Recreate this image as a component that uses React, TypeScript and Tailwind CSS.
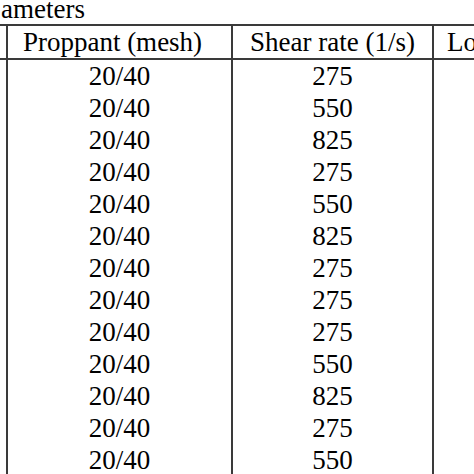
const rows = [
  ["20/40", "275"],
  ["20/40", "550"],
  ["20/40", "825"],
  ["20/40", "275"],
  ["20/40", "550"],
  ["20/40", "825"],
  ["20/40", "275"],
  ["20/40", "275"],
  ["20/40", "275"],
  ["20/40", "550"],
  ["20/40", "825"],
  ["20/40", "275"],
  ["20/40", "550"],
];

export default function App() {
  return (
    <div className="w-[474px] h-[474px] overflow-hidden bg-white text-black font-['Liberation_Serif','Times_New_Roman',serif] text-[27px]">
      {/* Caption, cropped on the left */}
      <div className="leading-[19px] pb-[5px] pl-[1px] whitespace-nowrap">ameters</div>

      <div className="border-t-2 border-[#3a3a3a]">
        {/* Header */}
        <div className="grid grid-cols-[6px_225px_201px_1fr] leading-[32px] border-b-2 border-[#3a3a3a]">
          <div />
          <div className="border-l-2 border-[#3a3a3a] text-center pr-[14px] whitespace-nowrap">Proppant (mesh)</div>
          <div className="border-l-2 border-[#3a3a3a] text-center whitespace-nowrap">Shear rate (1/s)</div>
          <div className="border-l-2 border-[#3a3a3a] pl-[13px] whitespace-nowrap overflow-hidden">Loading</div>
        </div>

        {/* Body */}
        {rows.map((r, i) => (
          <div key={i} className="grid grid-cols-[6px_225px_201px_1fr] leading-[32px]">
            <div />
            <div className="border-l-2 border-[#3a3a3a] text-center">{r[0]}</div>
            <div className="border-l-2 border-[#3a3a3a] text-center">{r[1]}</div>
            <div className="border-l-2 border-[#3a3a3a]" />
          </div>
        ))}
      </div>
    </div>
  );
}
